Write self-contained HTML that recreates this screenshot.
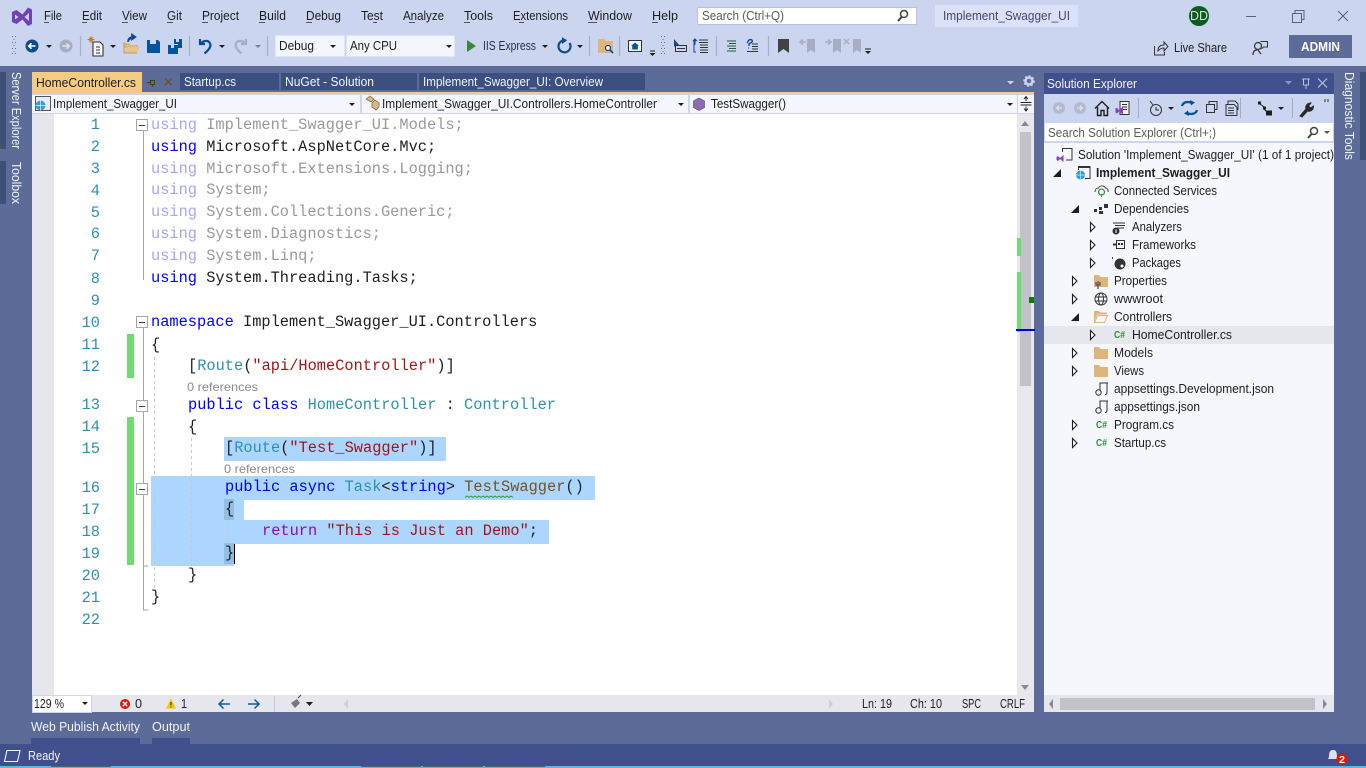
<!DOCTYPE html>
<html><head><meta charset="utf-8"><title>Implement_Swagger_UI</title>
<style>
html,body{margin:0;padding:0;background:#5d6b99;overflow:hidden}
svg{display:block}
text{font-family:"Liberation Sans",sans-serif;font-size:12.5px;fill:#1e1e1e;white-space:pre}
.m{font-family:"Liberation Mono",monospace;font-size:15.33px}
.k{fill:#0000ff}.t{fill:#2b91af}.s{fill:#a31515}.p{fill:#8f08c4}.g{fill:#999}.f{fill:#a6a6f0}.n{fill:#2b91af}.w{fill:#fff}.l{fill:#f1f3fb}.r{fill:#8a8a8a;font-size:12px}.h{fill:#2f8f2f;font-weight:bold;font-size:10px}
</style></head><body>
<svg width="1366" height="768" viewBox="0 0 1366 768" xmlns="http://www.w3.org/2000/svg">
<defs>
<path id="dd" d="M-3 0H3L0 3Z"/>
<path id="tr" d="M0 -4.500L4.500 0L0 4.500Z" fill="#fff" stroke="#1e1e1e" stroke-width="1.100"/>
<path id="ex" d="M4 -4V4H-4Z" fill="#1e1e1e"/>
<path id="fo" d="M0 1H5L6.500 3H14V13H0Z" fill="#dcb67a"/>
</defs>
<rect width="1366" height="66" fill="#ccd5f0"/>
<rect y="66" width="1366" height="678" fill="#5d6b99"/>
<!-- VS logo -->
<path d="M12 12L16.500 10L22.500 14.500L28 7.500L32 9.500V24L28 26L22.500 19.500L16.500 24L12 22ZM15 14.500V19.500L18.500 17ZM24.500 17L29 21V13Z" fill="#7040b8"/>
<!-- menu -->
<text x="44" y="20" textLength="18" lengthAdjust="spacingAndGlyphs">File</text>
<text x="82" y="20" textLength="20" lengthAdjust="spacingAndGlyphs">Edit</text>
<text x="122" y="20" textLength="25" lengthAdjust="spacingAndGlyphs">View</text>
<text x="167" y="20" textLength="15" lengthAdjust="spacingAndGlyphs">Git</text>
<text x="202" y="20" textLength="37" lengthAdjust="spacingAndGlyphs">Project</text>
<text x="259" y="20" textLength="27" lengthAdjust="spacingAndGlyphs">Build</text>
<text x="306" y="20" textLength="35" lengthAdjust="spacingAndGlyphs">Debug</text>
<text x="361" y="20" textLength="22" lengthAdjust="spacingAndGlyphs">Test</text>
<text x="403" y="20" textLength="41" lengthAdjust="spacingAndGlyphs">Analyze</text>
<text x="464" y="20" textLength="29" lengthAdjust="spacingAndGlyphs">Tools</text>
<text x="513" y="20" textLength="55" lengthAdjust="spacingAndGlyphs">Extensions</text>
<text x="588" y="20" textLength="44" lengthAdjust="spacingAndGlyphs">Window</text>
<text x="652" y="20" textLength="26" lengthAdjust="spacingAndGlyphs">Help</text>
<g stroke="#1e1e1e" stroke-width="1"><path d="M44 22.500h5M82 22.500h5M122 22.500h6M167 22.500h6M202 22.500h6M259 22.500h6M306 22.500h6M373 22.500h4M409 22.500h6M464 22.500h6M519 22.500h5M588 22.500h9M652 22.500h6" opacity=".7"/></g>
<!-- search -->
<rect x="697.500" y="7.500" width="219" height="17" fill="#fff" stroke="#b8c0da"/>
<text x="702" y="20" textLength="82" lengthAdjust="spacingAndGlyphs" style="fill:#5a5a5a">Search (Ctrl+Q)</text>
<circle cx="904" cy="14" r="3.500" fill="none" stroke="#424242" stroke-width="1.500"/><path d="M901.500 17L898 21" stroke="#424242" stroke-width="2"/>
<rect x="935" y="5" width="143" height="22" fill="#dce1f7"/>
<text x="943" y="20" textLength="127" lengthAdjust="spacingAndGlyphs" style="fill:#3f4a6e">Implement_Swagger_UI</text>
<circle cx="1199" cy="16" r="10" fill="#0a5c1e"/>
<text x="1190" y="20" textLength="18" lengthAdjust="spacingAndGlyphs" style="fill:#d5e5d5">DD</text>
<path d="M1246 16.500h10" stroke="#5a6075"/>
<path d="M1292.500 13.500h9v9h-9zM1295 13v-2.500h9v9h-2.500" fill="none" stroke="#5a6075"/>
<path d="M1338 11l10 10M1348 11l-10 10" stroke="#5a6075"/>
<!-- toolbar -->
<g fill="#5d6b99"><path d="M12 36h1v1h-1zM15 36h1v1h-1zM13.500 39h1v1h-1zM12 42h1v1h-1zM15 42h1v1h-1zM13.500 45h1v1h-1zM12 48h1v1h-1zM15 48h1v1h-1zM13.500 51h1v1h-1zM12 53h1v1h-1zM15 53h1v1h-1z"/></g>
<g stroke="#a3aecd" stroke-width="1.200"><path d="M80.500 36v20M189.500 36v20M267.500 36v20M589.500 36v20M619.500 36v20M716.500 36v20M768.500 36v20"/></g>
<circle cx="32" cy="46" r="6.500" fill="#0e4c8a"/><path d="M35.500 46h-6M31.500 43.300L28.700 46L31.500 48.700" stroke="#fff" stroke-width="1.600" fill="none"/>
<use href="#dd" x="49" y="45" fill="#1e1e1e"/>
<circle cx="66" cy="46" r="6.500" fill="#a8aebf"/><path d="M62.500 46h6M66.500 43.300L69.300 46L66.500 48.700" stroke="#dfe3f0" stroke-width="1.600" fill="none"/>
<path d="M93 42h7l3 3v11h-10z" fill="#f6f6f6" stroke="#333" stroke-width="1.100"/><path d="M96 47h4M96 50h4M96 53h4" stroke="#333"/>
<path d="M91 36v7M87.500 39.500h7M89 37.500l4 4M93 37.500l-4 4" stroke="#c27d1a" stroke-width="1"/>
<use href="#dd" x="113" y="45" fill="#1e1e1e"/>
<path d="M124 43h5l2 2h7v3h-14z" fill="#dcb67a"/><path d="M124 53L127 47H140L137 53Z" fill="#e6c48c"/><path d="M124 42v11h13" fill="none" stroke="#c79a55"/>
<path d="M128 42c0-4 2-5 5-5M132 34.500L135.500 37L132 39.500Z" stroke="#0e4c8a" stroke-width="1.600" fill="#0e4c8a"/>
<path d="M147 40h11l2 2v11h-13z" fill="#00539c"/><rect x="150" y="40" width="6" height="4" fill="#ccd5f0"/><rect x="150" y="48" width="6" height="5" fill="#00539c"/>
<path d="M168 45h8l2 0v9h-10z" fill="#00539c"/><rect x="171" y="45" width="3" height="3" fill="#ccd5f0"/>
<path d="M174 39h8v9h-4v-4h-4z" fill="#00539c"/><rect x="176" y="39" width="3" height="3" fill="#ccd5f0"/>
<path d="M200 39v5h5M200.500 43.500c3-3 7-3.500 9-1c2 2.500 1 6-5 11" fill="none" stroke="#0e4c8a" stroke-width="2.200"/>
<use href="#dd" x="222" y="45" fill="#1e1e1e"/>
<path d="M246 39v5h-5M245.500 43.500c-3-3-7-3.500-9-1c-2 2.500-1 6 5 11" fill="none" stroke="#a8aebf" stroke-width="2.200"/>
<use href="#dd" x="258" y="45" fill="#7c8094"/>
<rect x="275.500" y="35.500" width="69" height="21" fill="#f4f6fe" stroke="#dfe4f7"/>
<text x="279" y="50" textLength="35" lengthAdjust="spacingAndGlyphs">Debug</text><use href="#dd" x="333" y="45" fill="#1e1e1e"/>
<rect x="346.500" y="35.500" width="108" height="21" fill="#f4f6fe" stroke="#dfe4f7"/>
<text x="350" y="50" textLength="47" lengthAdjust="spacingAndGlyphs">Any CPU</text><use href="#dd" x="449" y="45" fill="#1e1e1e"/>
<path d="M467 40L476 46L467 52Z" fill="#388a34"/>
<text x="483" y="50" textLength="53" lengthAdjust="spacingAndGlyphs" style="fill:#2a2f45">IIS Express</text><use href="#dd" x="545" y="45" fill="#1e1e1e"/>
<path d="M566 40.500a6 6 0 1 0 3.500 2.500" fill="none" stroke="#0e4c8a" stroke-width="2.200"/><path d="M562 37L567 40.500L562 44Z" fill="#0e4c8a"/>
<use href="#dd" x="580" y="45" fill="#1e1e1e"/>
<path d="M598 39h6l2 2h7v12h-15z" fill="#dcb67a"/><circle cx="608" cy="48" r="2.500" fill="#fff" stroke="#0e4c8a" stroke-width="1.300"/><path d="M610 50l3 3" stroke="#0e4c8a" stroke-width="1.600"/>
<rect x="628.500" y="40.500" width="13" height="11" fill="#f4f6fe" stroke="#333"/><path d="M635 42.500l-4 3.500h1.200v3.500h5.600v-3.500h1.200z" fill="#00539c"/>
<path d="M650 51h5" stroke="#1e1e1e"/><use href="#dd" x="652.500" y="53" fill="#1e1e1e"/>
<g fill="#5d6b99"><path d="M661 36h1v1h-1zM664 36h1v1h-1zM662.500 39h1v1h-1zM661 42h1v1h-1zM664 42h1v1h-1zM662.500 45h1v1h-1zM661 48h1v1h-1zM664 48h1v1h-1zM662.500 51h1v1h-1zM661 53h1v1h-1zM664 53h1v1h-1z"/></g>
<path d="M674 39L674 47L676 45L680 46Z" fill="#0e4c8a"/><path d="M675.500 45.500h11v6h-11z" fill="none" stroke="#333"/><path d="M677 48.500h8" stroke="#333"/>
<path d="M696 41h-2v11h2" fill="none" stroke="#0e4c8a"/><path d="M695 39v6M693 41l2-2l2 2" fill="none" stroke="#0e4c8a"/><path d="M699 40h9M699 42.500h9M700 45h8M700 47.500h8M700 50h8M700 52.500h8" stroke="#333"/>
<path d="M727 41h9M729 43.500h7M727 46h9M729 48.500h7M727 51h9" stroke="#1f5c35"/>
<path d="M747 43l2-3c2-1 4 0 3 2l-3 2v2" fill="none" stroke="#0e4c8a" stroke-width="1.400"/><path d="M748 48h1" stroke="#0e4c8a"/><path d="M752 44h6M752 46.500h6M752 49h6M747 51.500h11" stroke="#333"/>
<path d="M778 39h11v14l-5.500-4l-5.500 4z" fill="#424242"/>
<path d="M807 39h8v14l-4-3l-4 3z" fill="#a8aebf"/><path d="M800 42h6M803 39.500L800 42l3 2.500" stroke="#a8aebf" stroke-width="1.500" fill="none"/>
<path d="M833 39h8v14l-4-3l-4 3z" fill="#a8aebf"/><path d="M825 42h6M828 39.500L831 42l-3 2.500" stroke="#a8aebf" stroke-width="1.500" fill="none"/>
<path d="M853 39h8v14l-4-3l-4 3z" fill="#a8aebf"/><path d="M844 39l5 5M849 39l-5 5" stroke="#a8aebf" stroke-width="1.400"/>
<path d="M865 49h6" stroke="#1e1e1e"/><use href="#dd" x="868" y="51" fill="#1e1e1e"/>
<!-- live share etc -->
<path d="M1154.500 46v9h10v-3" fill="none" stroke="#333"/><path d="M1158 51c0-4 2-6 6-6v-3l4 4.500l-4 4.500v-3c-3 0-4 1-6 3z" fill="none" stroke="#333"/>
<text x="1174" y="52" textLength="53" lengthAdjust="spacingAndGlyphs">Live Share</text>
<circle cx="1258" cy="46" r="3.500" fill="none" stroke="#333" stroke-width="1.200"/><path d="M1253 55c0-4 2-5 4-5M1261 54l-3-4" fill="none" stroke="#333" stroke-width="1.200"/><path d="M1260.500 41.500h7v5.500h-4l-2 2" fill="none" stroke="#333"/>
<rect x="1289" y="35" width="63" height="23" fill="#5d6b99"/>
<text x="1301" y="51" textLength="39" lengthAdjust="spacingAndGlyphs" font-weight="bold" class="w">ADMIN</text>
<!-- side strips -->
<rect x="0" y="72" width="6" height="77" fill="#3f5078"/><rect x="0" y="161" width="6" height="43" fill="#3f5078"/>
<rect x="1360" y="72" width="6" height="88" fill="#3f5078"/>
<text transform="translate(12,72) rotate(90)" textLength="77" lengthAdjust="spacingAndGlyphs" class="l">Server Explorer</text>
<text transform="translate(12,162) rotate(90)" textLength="42" lengthAdjust="spacingAndGlyphs" class="l">Toolbox</text>
<text transform="translate(1345,72) rotate(90)" textLength="88" lengthAdjust="spacingAndGlyphs" class="l">Diagnostic Tools</text>
<!-- tabs -->
<rect x="32" y="72" width="110" height="20" fill="#f5cc84"/>
<text x="36" y="87" textLength="100" lengthAdjust="spacingAndGlyphs">HomeController.cs</text>
<rect x="180" y="73" width="99" height="17" fill="#3b4f81"/><rect x="281" y="73" width="136" height="17" fill="#3b4f81"/><rect x="419" y="73" width="226" height="17" fill="#3b4f81"/>
<path d="M147 82.500h3M150.500 80.500h4v4h-4zM152.500 84.500v2" fill="none" stroke="#4a3a10"/>
<path d="M165 78.500l6.500 6.500M171.500 78.500l-6.500 6.500" stroke="#6a5020" stroke-width="1.300"/>
<text x="184" y="86" textLength="52" lengthAdjust="spacingAndGlyphs" class="l">Startup.cs</text>
<text x="285" y="86" textLength="89" lengthAdjust="spacingAndGlyphs" class="l">NuGet - Solution</text>
<text x="423" y="86" textLength="180" lengthAdjust="spacingAndGlyphs" class="l">Implement_Swagger_UI: Overview</text>
<path d="M1007 81h7l-3.500 3.500z" fill="#ccd5f0"/>
<circle cx="1029" cy="81" r="3.500" fill="none" stroke="#ccd5f0" stroke-width="2.500"/><circle cx="1029" cy="81" r="5.200" fill="none" stroke="#ccd5f0" stroke-width="1.200" stroke-dasharray="2 2"/>
<!-- editor -->
<rect x="32" y="92" width="1002" height="3" fill="#f5cc84"/>
<rect x="32" y="94" width="1002" height="20" fill="#ccd5f0"/>
<rect x="32" y="95" width="328" height="18" fill="#f5f6fe"/><rect x="362" y="95" width="326" height="18" fill="#f5f6fe"/><rect x="690" y="95" width="327" height="18" fill="#f5f6fe"/><rect x="1018" y="95" width="16" height="18" fill="#f5f6fe"/>
<rect x="35.500" y="96.500" width="15" height="14" fill="#e8ecf8" stroke="#555"/><circle cx="40.500" cy="105.500" r="5" fill="#3a9bd8"/><path d="M35.500 105.500h10M40.500 100.500v10" stroke="#e8f4ff" stroke-width=".7"/>
<text x="53" y="108" textLength="124" lengthAdjust="spacingAndGlyphs">Implement_Swagger_UI</text><use href="#dd" x="352" y="103" fill="#1e1e1e"/>
<path d="M366 99l4-3 4 3-3 3zM372 103l3-3 4 3v4l-3 3-4-3z" fill="#dcb67a" stroke="#70603a" stroke-width=".7"/>
<text x="382" y="108" textLength="275" lengthAdjust="spacingAndGlyphs">Implement_Swagger_UI.Controllers.HomeController</text><use href="#dd" x="681" y="103" fill="#1e1e1e"/>
<path d="M699 98l5.500 3v6.500l-5.500 3l-5.500-3V101z" fill="#8e6bb5" stroke="#5d4a7a" stroke-width=".7"/>
<text x="711" y="108" textLength="75" lengthAdjust="spacingAndGlyphs">TestSwagger()</text><use href="#dd" x="1010" y="103" fill="#1e1e1e"/>
<path d="M1020.500 102.500h11M1020.500 105h11M1026 97v4M1024 99l2-2.500l2 2.500M1026 106.500v4M1024 108.500l2 2.500l2-2.500" stroke="#1e1e1e" fill="none"/>
<rect x="32" y="114" width="1002" height="581" fill="#fff"/>
<rect x="32" y="114" width="22" height="581" fill="#e6e7ed"/>
<!-- scroll -->
<rect x="1017" y="114" width="17" height="581" fill="#e8e8ec"/>
<rect x="1020" y="132" width="11" height="254" fill="#c2c3c9"/>
<path d="M1021 126h8l-4-5z" fill="#868999"/><path d="M1021 685h8l-4 5z" fill="#868999"/>
<rect x="1017" y="238" width="4" height="18" fill="#6fdc6f"/><rect x="1017" y="272" width="4" height="60" fill="#6fdc6f"/>
<rect x="1029" y="297" width="5" height="6" fill="#0a7a0a"/>
<rect x="1016" y="329" width="19" height="2" fill="#0000cd"/>
<!-- change bars -->
<rect x="127" y="334" width="7" height="44" fill="#6fdc6f"/><rect x="127" y="417" width="7" height="148" fill="#6fdc6f"/>
<!-- selection -->
<g fill="#add6ff"><rect x="224" y="437" width="222" height="24"/><rect x="151" y="476" width="444" height="24"/><rect x="151" y="500" width="93" height="20"/><rect x="151" y="520" width="398" height="24"/><rect x="151" y="544" width="83" height="22"/></g>
<rect x="224" y="499" width="10" height="21" fill="#93bfe2"/><rect x="224" y="543" width="10" height="21" fill="#93bfe2"/>
<!-- outline -->
<g stroke="#a5a5a5" fill="none"><path d="M143.500 328V610h5M143.500 566h5M143.500 131V280"/></g>
<g fill="#fff" stroke="#a5a5a5"><rect x="136.500" y="119.500" width="11" height="11"/><rect x="136.500" y="316.500" width="11" height="11"/><rect x="136.500" y="400.500" width="11" height="11"/><rect x="136.500" y="483.500" width="11" height="11"/></g>
<path d="M139 125.500h6M139 322.500h6M139 406.500h6M139 489.500h6" stroke="#444"/>
<path d="M154.500 357V590M191.500 438V566M228.500 522V545" stroke="#c8c8c8" stroke-dasharray="3 3" fill="none"/>
<!-- line nos -->
<g class="m" text-anchor="end">
<text class="m n" x="100" y="129">1</text><text class="m n" x="100" y="151">2</text><text class="m n" x="100" y="173">3</text><text class="m n" x="100" y="195">4</text><text class="m n" x="100" y="217">5</text><text class="m n" x="100" y="238">6</text><text class="m n" x="100" y="260">7</text><text class="m n" x="100" y="283">8</text><text class="m n" x="100" y="305">9</text><text class="m n" x="100" y="327">10</text><text class="m n" x="100" y="349">11</text><text class="m n" x="100" y="371">12</text><text class="m n" x="100" y="409">13</text><text class="m n" x="100" y="431">14</text><text class="m n" x="100" y="453">15</text><text class="m n" x="100" y="492">16</text><text class="m n" x="100" y="514">17</text><text class="m n" x="100" y="536">18</text><text class="m n" x="100" y="558">19</text><text class="m n" x="100" y="580">20</text><text class="m n" x="100" y="602">21</text><text class="m n" x="100" y="624">22</text>
</g>
<!-- code -->
<text class="m" x="151" y="129"><tspan class="f">using</tspan><tspan class="g"> Implement_Swagger_UI.Models;</tspan></text>
<text class="m" x="151" y="151"><tspan class="k">using</tspan> Microsoft.AspNetCore.Mvc;</text>
<text class="m" x="151" y="173"><tspan class="f">using</tspan><tspan class="g"> Microsoft.Extensions.Logging;</tspan></text>
<text class="m" x="151" y="194"><tspan class="f">using</tspan><tspan class="g"> System;</tspan></text>
<text class="m" x="151" y="216"><tspan class="f">using</tspan><tspan class="g"> System.Collections.Generic;</tspan></text>
<text class="m" x="151" y="238"><tspan class="f">using</tspan><tspan class="g"> System.Diagnostics;</tspan></text>
<text class="m" x="151" y="260"><tspan class="f">using</tspan><tspan class="g"> System.Linq;</tspan></text>
<text class="m" x="151" y="282"><tspan class="k">using</tspan> System.Threading.Tasks;</text>
<text class="m" x="151" y="326"><tspan class="k">namespace</tspan> Implement_Swagger_UI.Controllers</text>
<text class="m" x="151" y="349">{</text>
<text class="m" x="188" y="370">[<tspan class="t">Route</tspan>(<tspan class="s">"api/HomeController"</tspan>)]</text>
<text x="187" y="391" textLength="71" lengthAdjust="spacingAndGlyphs" class="r">0 references</text>
<text class="m" x="188" y="409"><tspan class="k">public</tspan> <tspan class="k">class</tspan> <tspan class="t">HomeController</tspan> : <tspan class="t">Controller</tspan></text>
<text class="m" x="188" y="431">{</text>
<text class="m" x="225" y="452">[<tspan class="t">Route</tspan>(<tspan class="s">"Test_Swagger"</tspan>)]</text>
<text x="224" y="473" textLength="71" lengthAdjust="spacingAndGlyphs" class="r">0 references</text>
<text class="m" x="225" y="491"><tspan class="k">public</tspan> <tspan class="k">async</tspan> <tspan class="t">Task</tspan>&lt;<tspan class="k">string</tspan>&gt; <tspan style="fill:#74531f">TestSwagger</tspan>()</text>
<path d="M465 497.500l2-1.500 2 1.500 2-1.500 2 1.500 2-1.500 2 1.500 2-1.500 2 1.500 2-1.500 2 1.500 2-1.500 2 1.500 2-1.500 2 1.500 2-1.500 2 1.500 2-1.500 2 1.500 2-1.500 2 1.500 2-1.500 2 1.500 2-1.500 2 1.500" fill="none" stroke="#2e9e2e"/>
<text class="m" x="225" y="513">{</text>
<text class="m" x="262" y="535"><tspan class="p">return</tspan> <tspan class="s">"This is Just an Demo"</tspan>;</text>
<text class="m" x="225" y="557">}</text>
<rect x="234" y="544" width="1" height="20" fill="#000"/>
<text class="m" x="188" y="579">}</text>
<text class="m" x="151" y="601">}</text>
<!-- editor status -->
<rect x="32" y="695" width="1002" height="17" fill="#e6e7ed"/>
<rect x="32.500" y="695.500" width="59" height="17" fill="#fff" stroke="#ccd5f0"/>
<text x="34" y="708" textLength="30" lengthAdjust="spacingAndGlyphs">129 %</text><use href="#dd" x="85" y="702" fill="#1e1e1e"/>
<circle cx="125" cy="704" r="5" fill="#e51400"/><path d="M122.800 701.800l4.400 4.400M127.200 701.800l-4.400 4.400" stroke="#fff" stroke-width="1.400"/>
<text x="135" y="708" textLength="7" lengthAdjust="spacingAndGlyphs">0</text>
<path d="M171 698.500l5 10h-10z" fill="#f6c700"/><path d="M171 702v3.500M171 706.500v1" stroke="#222"/>
<text x="181" y="708" textLength="6" lengthAdjust="spacingAndGlyphs" style="fill:#2a1050">1</text>
<path d="M230 704h-11M223.500 699.500L219 704l4.500 4.500" fill="none" stroke="#0e5a9c" stroke-width="1.500"/>
<path d="M248 704h11M254.500 699.500L259 704l-4.500 4.500" fill="none" stroke="#0e5a9c" stroke-width="1.500"/>
<path d="M274.500 696v16" stroke="#c5c7cf"/>
<path d="M291 703l6-4l3 4l-5 5z" fill="#777"/><path d="M298 698l3-3" stroke="#444"/><path d="M306 702h7l-3.500 4z" fill="#1e1e1e"/>
<path d="M348 699v10l-4-5z" fill="#cfd0d6"/><path d="M829 699v10l4-5z" fill="#cfd0d6"/>
<text x="862" y="708" textLength="30" lengthAdjust="spacingAndGlyphs">Ln: 19</text>
<text x="910" y="708" textLength="32" lengthAdjust="spacingAndGlyphs">Ch: 10</text>
<text x="962" y="708" textLength="19" lengthAdjust="spacingAndGlyphs">SPC</text>
<text x="1000" y="708" textLength="25" lengthAdjust="spacingAndGlyphs">CRLF</text>
<!-- solution explorer -->
<rect x="1044" y="73" width="290" height="21" fill="#40508d"/>
<text x="1047" y="88" textLength="90" lengthAdjust="spacingAndGlyphs" class="l">Solution Explorer</text>
<path d="M1285 81h7l-3.500 3.500z" fill="#8d98c2"/>
<path d="M1303.500 79v6h5v-6zM1302 79h8M1306 85v4" fill="none" stroke="#b9c2e0"/><path d="M1318 78.500l9 9M1327 78.500l-9 9" stroke="#b9c2e0" stroke-width="1.200"/>
<rect x="1044" y="94" width="290" height="28" fill="#ccd5f0"/>
<circle cx="1059" cy="108" r="6" fill="#b4bacb"/><path d="M1062 108h-5M1059 105.700L1056.700 108l2.300 2.300" stroke="#dfe3f0" stroke-width="1.300" fill="none"/>
<circle cx="1080" cy="108" r="6" fill="#b4bacb"/><path d="M1077 108h5M1080 105.700l2.300 2.300l-2.300 2.300" stroke="#dfe3f0" stroke-width="1.300" fill="none"/>
<path d="M1095 108.500l7-7l7 7M1097.500 107v8.500h3.500v-5h3v5h3.500V107" fill="none" stroke="#1e1e1e" stroke-width="1.400"/>
<path d="M1120 101.500h9v13h-9z" fill="#f0f0f0" stroke="#333"/><path d="M1122 104.500h5M1122 107h5M1122 109.500h5" stroke="#333"/><path d="M1117 108l2 2l4-3.500v8l-4-3l-2 2l-1.500-1v-4.500z" fill="#8a3fc8"/>
<path d="M1138.500 98v20M1240.500 98v20M1292.500 98v20" stroke="#a3aecd"/>
<circle cx="1156" cy="110" r="5.500" fill="none" stroke="#333"/><path d="M1156 107v3h3M1150 101l3 4" fill="none" stroke="#333"/>
<use href="#dd" x="1171" y="107" fill="#1e1e1e"/>
<path d="M1182 106c1-4 6-5 10-3M1197 110c-1 4-6 5-10 3" fill="none" stroke="#00539c" stroke-width="2.200"/><path d="M1190 100l5 2.500l-4 3zM1189 116l-5-2.500l4-3z" fill="#00539c"/>
<path d="M1206.500 104.500h8v8h-8zM1209 104v-2.500h8v8h-2" fill="#ccd5f0" stroke="#333"/>
<path d="M1226 104.500h8l3 3v8h-11zM1228 104v-3h7l3 3v6" fill="#ccd5f0" stroke="#333"/><path d="M1228 108h6M1228 110.500h6M1228 113h6" stroke="#333"/>
<path d="M1258 101.500h3v3h-3zM1263 106.500h3v3h-3zM1266 110.500h6v5h-6z" fill="#1e1e1e"/><path d="M1260 104l4 3M1264 109l3 3" stroke="#1e1e1e"/>
<use href="#dd" x="1281" y="107" fill="#1e1e1e"/>
<path d="M1300 116l6-7c-1-3 1-6 5-6l-2.500 3l2 2l3-2c0 4-3 6-6 5l-5.500 6z" fill="#2a2a2a" stroke="#2a2a2a"/>
<path d="M1325 99v3M1328 99v3" stroke="#333"/>
<rect x="1044" y="122" width="290" height="21" fill="#ccd5f0"/><rect x="1044.500" y="122.500" width="289" height="19" fill="#fff" stroke="#ccd5f0"/>
<text x="1048" y="137" textLength="168" lengthAdjust="spacingAndGlyphs" style="fill:#5a5a5a">Search Solution Explorer (Ctrl+;)</text>
<circle cx="1314" cy="131" r="3.500" fill="none" stroke="#424242" stroke-width="1.500"/><path d="M1311.500 134L1308 138" stroke="#424242" stroke-width="2"/><use href="#dd" x="1327" y="131" fill="#555"/>
<rect x="1044" y="143" width="290" height="552" fill="#f6f7fc"/>
<rect x="1044" y="326" width="290" height="18" fill="#e6e7ed"/>
<rect x="1044" y="695" width="290" height="17" fill="#e6e7ed"/>
<rect x="1060" y="698" width="255" height="12" fill="#c2c3c9"/>
<path d="M1053 699v10l-4-5z" fill="#868999"/><path d="M1323 699v10l4-5z" fill="#868999"/>
<!-- tree text -->
<text x="1078" y="159" textLength="256" lengthAdjust="spacingAndGlyphs">Solution 'Implement_Swagger_UI' (1 of 1 project)</text>
<text x="1096" y="177" textLength="134" lengthAdjust="spacingAndGlyphs" font-weight="bold">Implement_Swagger_UI</text>
<text x="1114" y="195" textLength="103" lengthAdjust="spacingAndGlyphs">Connected Services</text>
<text x="1114" y="213" textLength="75" lengthAdjust="spacingAndGlyphs">Dependencies</text>
<text x="1132" y="231" textLength="50" lengthAdjust="spacingAndGlyphs">Analyzers</text>
<text x="1132" y="249" textLength="64" lengthAdjust="spacingAndGlyphs">Frameworks</text>
<text x="1132" y="267" textLength="49" lengthAdjust="spacingAndGlyphs">Packages</text>
<text x="1114" y="285" textLength="53" lengthAdjust="spacingAndGlyphs">Properties</text>
<text x="1114" y="303" textLength="49" lengthAdjust="spacingAndGlyphs">wwwroot</text>
<text x="1114" y="321" textLength="58" lengthAdjust="spacingAndGlyphs">Controllers</text>
<text x="1132" y="339" textLength="100" lengthAdjust="spacingAndGlyphs">HomeController.cs</text>
<text x="1114" y="357" textLength="39" lengthAdjust="spacingAndGlyphs">Models</text>
<text x="1114" y="375" textLength="30" lengthAdjust="spacingAndGlyphs">Views</text>
<text x="1114" y="393" textLength="160" lengthAdjust="spacingAndGlyphs">appsettings.Development.json</text>
<text x="1114" y="411" textLength="86" lengthAdjust="spacingAndGlyphs">appsettings.json</text>
<text x="1114" y="429" textLength="60" lengthAdjust="spacingAndGlyphs">Program.cs</text>
<text x="1114" y="447" textLength="52" lengthAdjust="spacingAndGlyphs">Startup.cs</text>
<!-- expanders -->
<use href="#ex" x="1057" y="173"/><use href="#ex" x="1075" y="209"/><use href="#ex" x="1075" y="317"/>
<use href="#tr" x="1090.500" y="227"/><use href="#tr" x="1090.500" y="245"/><use href="#tr" x="1090.500" y="263"/>
<use href="#tr" x="1072.500" y="281"/><use href="#tr" x="1072.500" y="299"/>
<use href="#tr" x="1090.500" y="335"/>
<use href="#tr" x="1072.500" y="353"/><use href="#tr" x="1072.500" y="371"/><use href="#tr" x="1072.500" y="425"/><use href="#tr" x="1072.500" y="443"/>
<!-- tree icons -->
<path d="M1062.500 152v-3.500h9.500v11.500h-6" fill="none" stroke="#333"/><path d="M1058 156l2 2 3.500-3v7l-3.500-3-2 2-1.500-1v-3z" fill="#8a3fc8"/>
<path d="M1078.500 170v-3.500h11.500v12h-5" fill="none" stroke="#333"/><rect x="1079" y="166" width="11" height="2" fill="#333"/><circle cx="1080.500" cy="175" r="4.500" fill="#2d9fd8"/><path d="M1076 175h9M1080.500 170.500v9" stroke="#d8f0ff" stroke-width=".7"/>
<path d="M1095 192c0-3 2-4 3.500-4c1-2.500 5-3 7 0c2 0 3 2 2.500 4" fill="none" stroke="#444"/><circle cx="1101.500" cy="192" r="3" fill="none" stroke="#3a9a3a" stroke-width="1.300"/><path d="M1101.500 194v3" stroke="#3a9a3a"/>
<path d="M1094 209h3v3h-3zM1099 207h3v3h-3zM1099 211h4v3h-4zM1104 204h4v4h-4z" fill="#333"/>
<path d="M1113 223h12M1115 225.500h10M1117 228h7" stroke="#333"/><circle cx="1116" cy="231" r="3.500" fill="#333"/><path d="M1116 229.500v3.500" stroke="#fff"/>
<path d="M1113 244.500h3" stroke="#333" stroke-width="2"/><rect x="1116.500" y="240.500" width="8" height="8" fill="none" stroke="#333"/><rect x="1118" y="243" width="2" height="2" fill="#333"/><rect x="1121" y="243" width="2" height="2" fill="#333"/>
<path d="M1112.500 257v2" stroke="#555"/><circle cx="1120" cy="264" r="5.500" fill="#333"/><circle cx="1122" cy="266" r="1.500" fill="#fff"/>
<use href="#fo" x="1094" y="274"/><path d="M1098 281v8M1096 282v3h4v-3" stroke="#444" fill="none" stroke-width="1.100"/>
<circle cx="1101" cy="299" r="6" fill="none" stroke="#333"/><ellipse cx="1101" cy="299" rx="2.500" ry="6" fill="none" stroke="#333"/><path d="M1095 297h12M1095 301h12" stroke="#333"/>
<path d="M1094 311h5l1.500 1.500H1107v2H1097l-3 7z" fill="#dcb67a"/><path d="M1094.500 311.500v11h10l3-7h-10l-3 7" fill="#f6f7fc" stroke="#dcb67a"/>
<use href="#fo" x="1094" y="346"/><use href="#fo" x="1094" y="364"/>
<path d="M1100 390v-7h7v9c0 2-1 2.500-2 2.500" fill="none" stroke="#333"/><circle cx="1098.500" cy="392.500" r="2.700" fill="none" stroke="#333"/><path d="M1100 383h8" stroke="#333"/>
<path d="M1100 408v-7h7v9c0 2-1 2.500-2 2.500" fill="none" stroke="#333"/><circle cx="1098.500" cy="410.500" r="2.700" fill="none" stroke="#333"/><path d="M1100 401h8" stroke="#333"/>
<text x="1114" y="338" class="h" textLength="11" lengthAdjust="spacingAndGlyphs">C#</text>
<text x="1096" y="428" class="h" textLength="11" lengthAdjust="spacingAndGlyphs">C#</text>
<text x="1096" y="446" class="h" textLength="11" lengthAdjust="spacingAndGlyphs">C#</text>
<!-- bottom tabs -->
<text x="31" y="731" textLength="109" lengthAdjust="spacingAndGlyphs" class="l">Web Publish Activity</text>
<text x="152" y="731" textLength="38" lengthAdjust="spacingAndGlyphs" class="l">Output</text>
<rect x="31" y="738" width="109" height="6" fill="#40508d"/><rect x="152" y="738" width="38" height="6" fill="#40508d"/>
<!-- status bar -->
<rect y="744" width="1366" height="22" fill="#40508d"/>
<path d="M7 750.500h13l-2.500 11H4.500z" fill="none" stroke="#f1f3fb" stroke-width="1.100"/>
<text x="28" y="760" textLength="32" lengthAdjust="spacingAndGlyphs" class="l">Ready</text>
<path d="M1329 757c0-5 1-7 4-7s4 2 4 7l1 2h-10z" fill="#dfe2ee"/>
<circle cx="1342" cy="759" r="5.500" fill="#e51400"/>
<text x="1339" y="763" textLength="6" lengthAdjust="spacingAndGlyphs" font-weight="bold" class="w" style="font-size:10px">2</text>
<rect y="766" width="1366" height="2" fill="#62b6d8"/>
<path d="M51 766.500h60M361 766.500h60M423 766.500h60M485 766.500h60" stroke="#444" opacity=".7"/>
</svg>
</body></html>
